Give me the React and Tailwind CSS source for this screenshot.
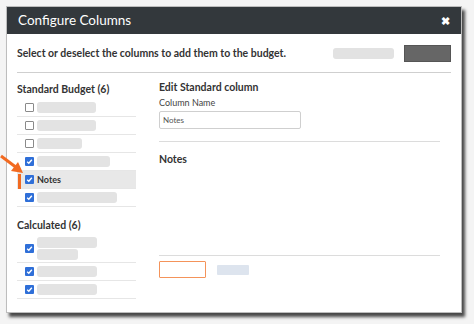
import React from "react";

const Check = ({ on }) =>
  on ? (
    <span className="w-[9px] h-[9px] rounded-[1px] bg-[#2f6fd8] flex items-center justify-center shrink-0">
      <svg width="7" height="7" viewBox="0 0 6 6">
        <path d="M1 3.2 L2.4 4.5 L5 1.5" stroke="white" strokeWidth="1.2" fill="none" />
      </svg>
    </span>
  ) : (
    <span className="w-[9px] h-[9px] rounded-[1px] border border-[#8a8a8a] bg-white shrink-0" />
  );

const Bar = ({ w }) => <span className="h-[11px] rounded-[3px] bg-[#e3e3e3] block" style={{ width: w }} />;

const Row = ({ on, w, children, hl, h = 18 }) => (
  <div
    className={`flex items-center gap-[3px] pl-[8px] border-b border-[#e6e6e6] ${hl ? "bg-[#e8e8e8]" : ""}`}
    style={{ height: h }}
  >
    <Check on={on} />
    {children || <Bar w={w} />}
  </div>
);

export default function App() {
  return (
    <div className="w-[474px] h-[324px] bg-[#f4f4f4] relative overflow-hidden" style={{ fontFamily: "Lato, 'Open Sans', sans-serif" }}>
      <div className="absolute left-[6px] top-[6px] w-[456px] h-[307px] bg-white border border-[#bdbdbd] shadow-[3px_4px_3px_rgba(0,0,0,0.7)] flex flex-col">
        <div className="h-[27px] bg-[#33383c] flex items-center justify-between pl-[11px] pr-[11px] shrink-0">
          <span className="text-white text-[13.5px]">Configure Columns</span>
          <span className="text-white text-[11px] font-bold leading-none">✖</span>
        </div>
        <div className="px-[10px] flex flex-col flex-1">
          <div className="h-[39px] flex items-center justify-between border-b border-[#cfcfcf] pt-[1px]">
            <span className="text-[10.5px] font-bold text-[#333]">Select or deselect the columns to add them to the budget.</span>
            <div className="flex items-center gap-[10px]">
              <span className="w-[61px] h-[11px] rounded-[3px] bg-[#e2e2e2]" />
              <span className="w-[47px] h-[17px] bg-[#666] border border-[#555]" />
            </div>
          </div>
          <div className="flex gap-[23px]">
            <div className="w-[119px] flex flex-col">
              <div className="h-[25px] pt-[10px] text-[10.5px] font-bold text-[#333] leading-[13px]">Standard Budget (6)</div>
              <div className="h-[1px]" />
              <Row w={59} />
              <Row w={59} />
              <Row w={45} />
              <Row on w={73} />
              <Row on hl>
                <span className="text-[9px] font-bold text-[#333]">Notes</span>
              </Row>
              <Row on w={80} />
              <div className="h-[28px] pt-[12px] text-[10.5px] font-bold text-[#333] leading-[13px]">Calculated (6)</div>
              <Row on h={28}>
                <div className="flex flex-col gap-[1px]">
                  <Bar w={60} />
                  <Bar w={41} />
                </div>
              </Row>
              <Row on w={60} />
              <Row on w={60} />
            </div>
            <div className="w-[281px] flex flex-col">
              <div className="pt-[8px] text-[10.5px] font-bold text-[#333] leading-[13px]">Edit Standard column</div>
              <div className="mt-[3px] text-[9px] text-[#444] leading-[11px]">Column Name</div>
              <div className="mt-[3px] w-[142px] h-[18px] border border-[#cfcfcf] rounded-[2px] flex items-center pl-[3px] text-[8px] text-[#555]">Notes</div>
              <div className="mt-[12px] border-b border-[#dcdcdc]" />
              <div className="mt-[11px] text-[10.5px] font-bold text-[#333] leading-[13px]">Notes</div>
              <div className="mt-[89px] border-b border-[#dcdcdc]" />
              <div className="mt-[5px] flex items-center gap-[11px]">
                <span className="w-[47px] h-[17px] rounded-[1px] bg-white border border-[#f4935a]" />
                <span className="w-[32px] h-[10px] bg-[#dde4ee] rounded-[1px]" />
              </div>
            </div>
          </div>
        </div>
      </div>
      <svg className="absolute left-0 top-0" width="40" height="200" viewBox="0 0 40 200">
        <line x1="1" y1="156" x2="17" y2="168" stroke="#f26a21" strokeWidth="3" />
        <polygon points="23,173 11,171 18,162" fill="#f26a21" />
        <rect x="18" y="174" width="3" height="15" fill="#f26a21" />
      </svg>
    </div>
  );
}
